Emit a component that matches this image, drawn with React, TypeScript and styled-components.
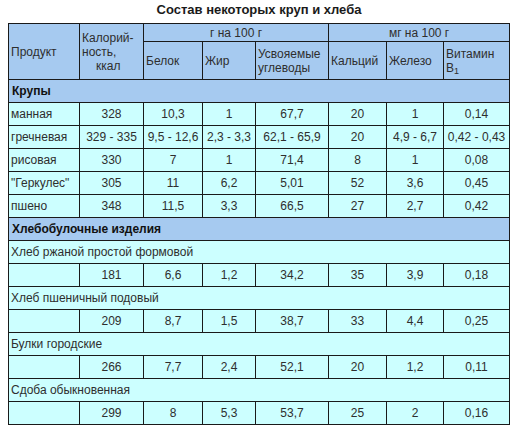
import React from "react";
import styled, { createGlobalStyle } from "styled-components";

const GlobalStyle = createGlobalStyle`
  body {
    margin: 0;
    background: #ffffff;
    font-family: "Liberation Sans", Arial, sans-serif;
    color: #2e2e2e;
  }
`;

const Page = styled.div`
  padding: 2px 0 0 8px;
`;

const Title = styled.div`
  width: 502px;
  text-align: center;
  font-size: 13px;
  font-weight: bold;
  line-height: 16px;
  color: #1a1a1a;
  margin-bottom: 5px;
`;

const Table = styled.table`
  border-collapse: collapse;
  table-layout: fixed;
  width: 502px;
  font-size: 12px;
  line-height: 14px;
`;

const HeadCell = styled.th<{ $align?: string }>`
  background: #a6caf0;
  border: 1px solid #1a1a1a;
  font-weight: normal;
  text-align: ${(p) => p.$align || "left"};
  vertical-align: middle;
  padding: 1px 2px;
  color: #2e2e2e;
`;

const GroupCell = styled(HeadCell)`
  height: 15px;
`;

const SubCell = styled(HeadCell)`
  height: 35px;
`;

const SectionCell = styled.td`
  background: #a6caf0;
  border: 1px solid #1a1a1a;
  font-weight: bold;
  color: #111;
  padding: 0 3px;
  height: 22px;
`;

const NameCell = styled.td`
  background: #ccffff;
  border: 1px solid #1a1a1a;
  padding: 0 2px;
  height: 22px;
`;

const DataCell = styled.td<{ $left?: boolean }>`
  background: #ccffff;
  border: 1px solid #1a1a1a;
  text-align: ${(p) => (p.$left ? "left" : "center")};
  padding: 0 2px;
  height: 22px;
  white-space: nowrap;
`;

const Indent = styled.span`
  display: inline-block;
  padding-left: 14px;
`;

const Sub = styled.sub`
  font-size: 9px;
  vertical-align: -2px;
  line-height: 0;
`;

const widths = [71, 64, 59, 53, 73, 58, 57, 66];

const cereals: string[][] = [
  ["манная", "328", "10,3", "1", "67,7", "20", "1", "0,14"],
  ["гречневая", "329 - 335", "9,5 - 12,6", "2,3 - 3,3", "62,1 - 65,9", "20", "4,9 - 6,7", "0,42 - 0,43"],
  ["рисовая", "330", "7", "1", "71,4", "8", "1", "0,08"],
  ["\"Геркулес\"", "305", "11", "6,2", "5,01", "52", "3,6", "0,45"],
  ["пшено", "348", "11,5", "3,3", "66,5", "27", "2,7", "0,42"],
];

const breads: { name: string; values: string[] }[] = [
  { name: "Хлеб ржаной простой формовой", values: ["181", "6,6", "1,2", "34,2", "35", "3,9", "0,18"] },
  { name: "Хлеб пшеничный подовый", values: ["209", "8,7", "1,5", "38,7", "33", "4,4", "0,25"] },
  { name: "Булки городские", values: ["266", "7,7", "2,4", "52,1", "20", "1,2", "0,11"] },
  { name: "Сдоба обыкновенная", values: ["299", "8", "5,3", "53,7", "25", "2", "0,16"] },
];

export default function App() {
  return (
    <>
      <GlobalStyle />
      <Page>
        <Title>Состав некоторых круп и хлеба</Title>
        <Table>
          <colgroup>
            {widths.map((w, i) => (
              <col key={i} style={{ width: w }} />
            ))}
          </colgroup>
          <thead>
            <tr>
              <HeadCell rowSpan={2}>Продукт</HeadCell>
              <HeadCell rowSpan={2}>
                Калорий-
                <br />
                ность,
                <br />
                <Indent>ккал</Indent>
              </HeadCell>
              <GroupCell colSpan={3} $align="center">г на 100 г</GroupCell>
              <GroupCell colSpan={3} $align="center">мг на 100 г</GroupCell>
            </tr>
            <tr>
              <SubCell>Белок</SubCell>
              <SubCell>Жир</SubCell>
              <SubCell>
                Усвояемые
                <br />
                углеводы
              </SubCell>
              <SubCell>Кальций</SubCell>
              <SubCell>Железо</SubCell>
              <SubCell>
                Витамин
                <br />
                B<Sub>1</Sub>
              </SubCell>
            </tr>
          </thead>
          <tbody>
            <tr>
              <SectionCell colSpan={8}>Крупы</SectionCell>
            </tr>
            {cereals.map((row) => (
              <tr key={row[0]}>
                {row.map((v, i) => (
                  <DataCell key={i} $left={i === 0}>
                    {v}
                  </DataCell>
                ))}
              </tr>
            ))}
            <tr>
              <SectionCell colSpan={8}>Хлебобулочные изделия</SectionCell>
            </tr>
            {breads.map((b) => (
              <React.Fragment key={b.name}>
                <tr>
                  <NameCell colSpan={8}>{b.name}</NameCell>
                </tr>
                <tr>
                  <DataCell />
                  {b.values.map((v, i) => (
                    <DataCell key={i}>{v}</DataCell>
                  ))}
                </tr>
              </React.Fragment>
            ))}
          </tbody>
        </Table>
      </Page>
    </>
  );
}
